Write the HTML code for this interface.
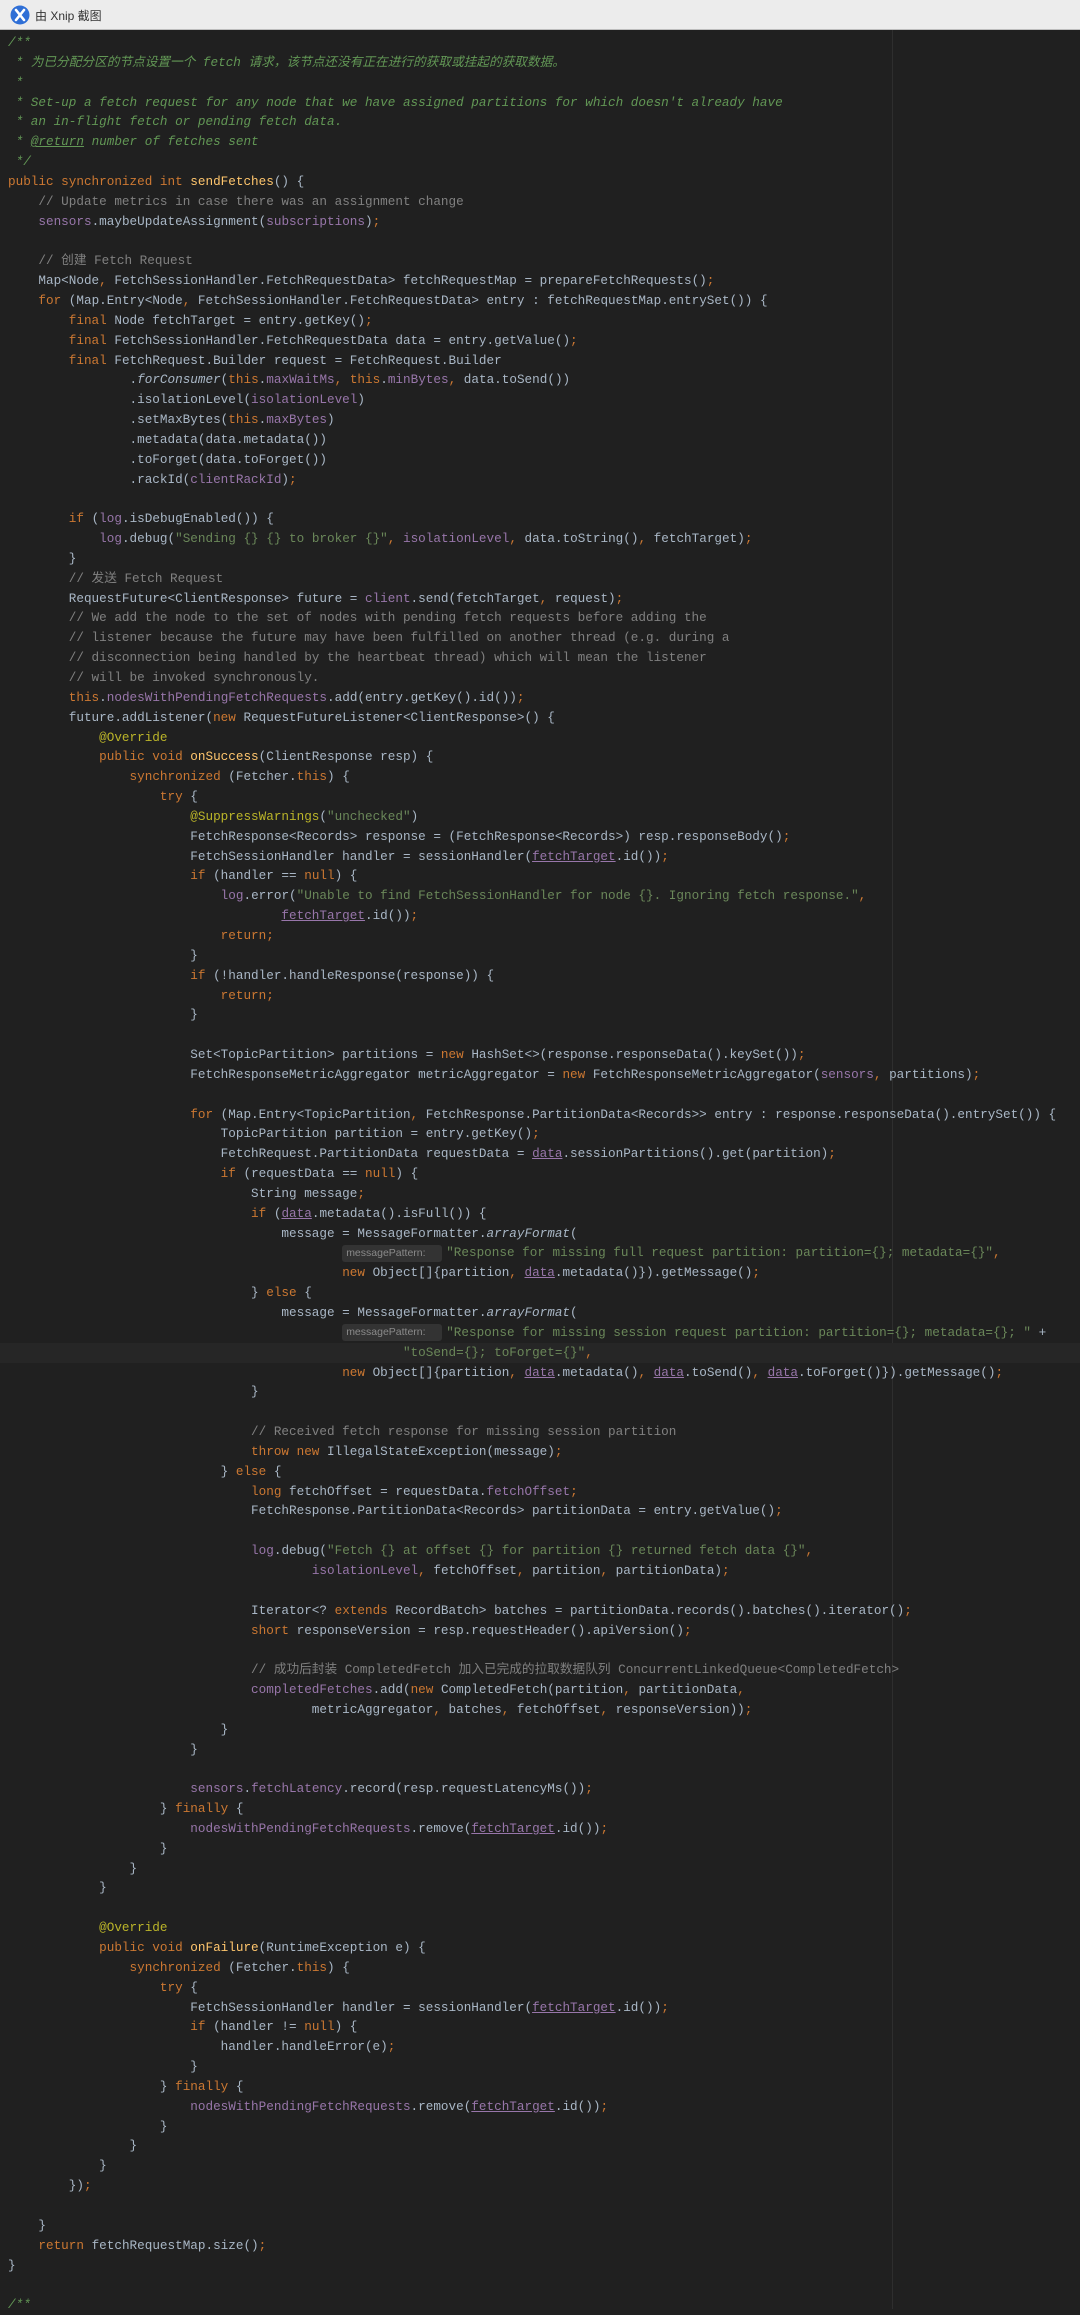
<!DOCTYPE html>
<html><head><meta charset="utf-8"><style>
html,body{margin:0;padding:0;}
body{width:1080px;height:2309px;background:#202020;position:relative;overflow:hidden;}
#hdr{position:absolute;left:0;top:0;width:1080px;height:29px;background:#ececec;border-bottom:1px solid #bdbdbd;}
#hdr .t{position:absolute;left:35px;top:7px;font:12px "Liberation Sans","Noto Sans CJK SC",sans-serif;color:#333;}
#margin{position:absolute;left:892px;top:30px;width:1px;height:2279px;background:#2e2e2e;}
#caret{position:absolute;left:0;top:1343px;width:1080px;height:20px;background:#262626;}
pre{position:absolute;left:8px;top:33px;margin:0;font:12.67px/19.85px "Liberation Mono","Noto Sans CJK SC",monospace;color:#a9b7c6;white-space:pre;}
.k{color:#cc7832}.f{color:#9876aa}.s{color:#6a8759}.c{color:#808080}.d{color:#629755;font-style:italic}
.a{color:#bbb529}.m{color:#ffc66d}.i{font-style:italic}.u{color:#9876aa;text-decoration:underline}
.h{display:inline-block;width:100px;height:17px;background:#333;color:#8a8a8a;font:10.5px "Liberation Sans",sans-serif;line-height:17px;text-indent:4px;vertical-align:middle;border-radius:3px;margin-right:4px}
</style></head><body>
<div id="hdr"><svg style="position:absolute;left:10px;top:5px" width="20" height="20" viewBox="0 0 20 20"><circle cx="10" cy="10" r="9.5" fill="#2f6fd6"/><path d="M6 5 L14 15 M14 5 L6 15" stroke="#fff" stroke-width="2.6" stroke-linecap="round"/></svg><span class="t">由 Xnip 截图</span></div>
<div id="margin"></div>
<div id="caret"></div>
<pre><span class="d">/**
 * 为已分配分区的节点设置一个 fetch 请求，该节点还没有正在进行的获取或挂起的获取数据。
 *
 * Set-up a fetch request for any node that we have assigned partitions for which doesn't already have
 * an in-flight fetch or pending fetch data.
 * <u>@return</u> number of fetches sent
 */</span>
<span class="k">public synchronized int </span><span class="m">sendFetches</span>() {
    <span class="c">// Update metrics in case there was an assignment change</span>
    <span class="f">sensors</span>.maybeUpdateAssignment(<span class="f">subscriptions</span>)<span class="k">;</span>

    <span class="c">// 创建 Fetch Request</span>
    Map&lt;Node<span class="k">,</span> FetchSessionHandler.FetchRequestData&gt; fetchRequestMap = prepareFetchRequests()<span class="k">;</span>
    <span class="k">for </span>(Map.Entry&lt;Node<span class="k">,</span> FetchSessionHandler.FetchRequestData&gt; entry : fetchRequestMap.entrySet()) {
        <span class="k">final </span>Node fetchTarget = entry.getKey()<span class="k">;</span>
        <span class="k">final </span>FetchSessionHandler.FetchRequestData data = entry.getValue()<span class="k">;</span>
        <span class="k">final </span>FetchRequest.Builder request = FetchRequest.Builder
                .<span class="i">forConsumer</span>(<span class="k">this</span>.<span class="f">maxWaitMs</span><span class="k">, this</span>.<span class="f">minBytes</span><span class="k">,</span> data.toSend())
                .isolationLevel(<span class="f">isolationLevel</span>)
                .setMaxBytes(<span class="k">this</span>.<span class="f">maxBytes</span>)
                .metadata(data.metadata())
                .toForget(data.toForget())
                .rackId(<span class="f">clientRackId</span>)<span class="k">;</span>

        <span class="k">if </span>(<span class="f">log</span>.isDebugEnabled()) {
            <span class="f">log</span>.debug(<span class="s">"Sending {} {} to broker {}"</span><span class="k">, </span><span class="f">isolationLevel</span><span class="k">,</span> data.toString()<span class="k">,</span> fetchTarget)<span class="k">;</span>
        }
        <span class="c">// 发送 Fetch Request</span>
        RequestFuture&lt;ClientResponse&gt; future = <span class="f">client</span>.send(fetchTarget<span class="k">,</span> request)<span class="k">;</span>
        <span class="c">// We add the node to the set of nodes with pending fetch requests before adding the</span>
        <span class="c">// listener because the future may have been fulfilled on another thread (e.g. during a</span>
        <span class="c">// disconnection being handled by the heartbeat thread) which will mean the listener</span>
        <span class="c">// will be invoked synchronously.</span>
        <span class="k">this</span>.<span class="f">nodesWithPendingFetchRequests</span>.add(entry.getKey().id())<span class="k">;</span>
        future.addListener(<span class="k">new </span>RequestFutureListener&lt;ClientResponse&gt;() {
            <span class="a">@Override</span>
            <span class="k">public void </span><span class="m">onSuccess</span>(ClientResponse resp) {
                <span class="k">synchronized </span>(Fetcher.<span class="k">this</span>) {
                    <span class="k">try </span>{
                        <span class="a">@SuppressWarnings</span>(<span class="s">"unchecked"</span>)
                        FetchResponse&lt;Records&gt; response = (FetchResponse&lt;Records&gt;) resp.responseBody()<span class="k">;</span>
                        FetchSessionHandler handler = sessionHandler(<span class="u">fetchTarget</span>.id())<span class="k">;</span>
                        <span class="k">if </span>(handler == <span class="k">null</span>) {
                            <span class="f">log</span>.error(<span class="s">"Unable to find FetchSessionHandler for node {}. Ignoring fetch response."</span><span class="k">,</span>
                                    <span class="u">fetchTarget</span>.id())<span class="k">;</span>
                            <span class="k">return;</span>
                        }
                        <span class="k">if </span>(!handler.handleResponse(response)) {
                            <span class="k">return;</span>
                        }

                        Set&lt;TopicPartition&gt; partitions = <span class="k">new </span>HashSet&lt;&gt;(response.responseData().keySet())<span class="k">;</span>
                        FetchResponseMetricAggregator metricAggregator = <span class="k">new </span>FetchResponseMetricAggregator(<span class="f">sensors</span><span class="k">,</span> partitions)<span class="k">;</span>

                        <span class="k">for </span>(Map.Entry&lt;TopicPartition<span class="k">,</span> FetchResponse.PartitionData&lt;Records&gt;&gt; entry : response.responseData().entrySet()) {
                            TopicPartition partition = entry.getKey()<span class="k">;</span>
                            FetchRequest.PartitionData requestData = <span class="u">data</span>.sessionPartitions().get(partition)<span class="k">;</span>
                            <span class="k">if </span>(requestData == <span class="k">null</span>) {
                                String message<span class="k">;</span>
                                <span class="k">if </span>(<span class="u">data</span>.metadata().isFull()) {
                                    message = MessageFormatter.<span class="i">arrayFormat</span>(
                                            <span class="h">messagePattern:</span><span class="s">"Response for missing full request partition: partition={}; metadata={}"</span><span class="k">,</span>
                                            <span class="k">new </span>Object[]{partition<span class="k">, </span><span class="u">data</span>.metadata()}).getMessage()<span class="k">;</span>
                                } <span class="k">else </span>{
                                    message = MessageFormatter.<span class="i">arrayFormat</span>(
                                            <span class="h">messagePattern:</span><span class="s">"Response for missing session request partition: partition={}; metadata={}; "</span> +
                                                    <span class="s">"toSend={}; toForget={}"</span><span class="k">,</span>
                                            <span class="k">new </span>Object[]{partition<span class="k">, </span><span class="u">data</span>.metadata()<span class="k">, </span><span class="u">data</span>.toSend()<span class="k">, </span><span class="u">data</span>.toForget()}).getMessage()<span class="k">;</span>
                                }

                                <span class="c">// Received fetch response for missing session partition</span>
                                <span class="k">throw new </span>IllegalStateException(message)<span class="k">;</span>
                            } <span class="k">else </span>{
                                <span class="k">long </span>fetchOffset = requestData.<span class="f">fetchOffset</span><span class="k">;</span>
                                FetchResponse.PartitionData&lt;Records&gt; partitionData = entry.getValue()<span class="k">;</span>

                                <span class="f">log</span>.debug(<span class="s">"Fetch {} at offset {} for partition {} returned fetch data {}"</span><span class="k">,</span>
                                        <span class="f">isolationLevel</span><span class="k">,</span> fetchOffset<span class="k">,</span> partition<span class="k">,</span> partitionData)<span class="k">;</span>

                                Iterator&lt;? <span class="k">extends </span>RecordBatch&gt; batches = partitionData.records().batches().iterator()<span class="k">;</span>
                                <span class="k">short </span>responseVersion = resp.requestHeader().apiVersion()<span class="k">;</span>

                                <span class="c">// 成功后封装 CompletedFetch 加入已完成的拉取数据队列 ConcurrentLinkedQueue&lt;CompletedFetch&gt;</span>
                                <span class="f">completedFetches</span>.add(<span class="k">new </span>CompletedFetch(partition<span class="k">,</span> partitionData<span class="k">,</span>
                                        metricAggregator<span class="k">,</span> batches<span class="k">,</span> fetchOffset<span class="k">,</span> responseVersion))<span class="k">;</span>
                            }
                        }

                        <span class="f">sensors</span>.<span class="f">fetchLatency</span>.record(resp.requestLatencyMs())<span class="k">;</span>
                    } <span class="k">finally </span>{
                        <span class="f">nodesWithPendingFetchRequests</span>.remove(<span class="u">fetchTarget</span>.id())<span class="k">;</span>
                    }
                }
            }

            <span class="a">@Override</span>
            <span class="k">public void </span><span class="m">onFailure</span>(RuntimeException e) {
                <span class="k">synchronized </span>(Fetcher.<span class="k">this</span>) {
                    <span class="k">try </span>{
                        FetchSessionHandler handler = sessionHandler(<span class="u">fetchTarget</span>.id())<span class="k">;</span>
                        <span class="k">if </span>(handler != <span class="k">null</span>) {
                            handler.handleError(e)<span class="k">;</span>
                        }
                    } <span class="k">finally </span>{
                        <span class="f">nodesWithPendingFetchRequests</span>.remove(<span class="u">fetchTarget</span>.id())<span class="k">;</span>
                    }
                }
            }
        })<span class="k">;</span>

    }
    <span class="k">return </span>fetchRequestMap.size()<span class="k">;</span>
}

<span class="d">/**</span></pre>
</body></html>
